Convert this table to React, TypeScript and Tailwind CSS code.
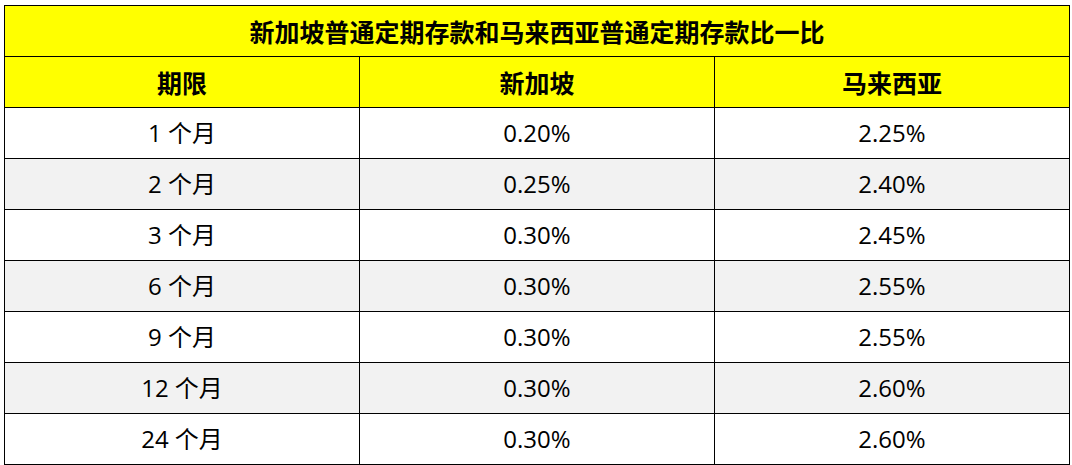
import React from "react";

const rows: [string, string, string][] = [
  ["1 个月", "0.20%", "2.25%"],
  ["2 个月", "0.25%", "2.40%"],
  ["3 个月", "0.30%", "2.45%"],
  ["6 个月", "0.30%", "2.55%"],
  ["9 个月", "0.30%", "2.55%"],
  ["12 个月", "0.30%", "2.60%"],
  ["24 个月", "0.30%", "2.60%"],
];

export default function App() {
  return (
    <div
      className="w-[1072px] h-[465px] bg-white pt-[5px] pl-[4px]"
      style={{ fontFamily: '"Open Sans", "Noto Sans CJK SC", sans-serif' }}
    >
      <table className="w-[1066px] border-collapse table-fixed text-[24px] text-black">
        <thead>
          <tr className="h-[51px] bg-[#ffff00]">
            <th
              colSpan={3}
              className="border border-black font-bold text-[25px] text-center p-0 leading-none"
              style={{ fontFamily: '"Noto Sans CJK SC", sans-serif' }}
            >
              新加坡普通定期存款和马来西亚普通定期存款比一比
            </th>
          </tr>
          <tr className="h-[51px] bg-[#ffff00]">
            {["期限", "新加坡", "马来西亚"].map((h) => (
              <th
                key={h}
                className="border border-black font-bold text-[25px] text-center p-0 leading-none"
                style={{ fontFamily: '"Noto Sans CJK SC", sans-serif' }}
              >
                {h}
              </th>
            ))}
          </tr>
        </thead>
        <tbody>
          {rows.map((r, i) => (
            <tr
              key={r[0]}
              className={`h-[51px] ${i % 2 === 1 ? "bg-[#f2f2f2]" : "bg-white"}`}
            >
              {r.map((c, j) => (
                <td key={j} className="border border-black text-center p-0 leading-none">
                  {c}
                </td>
              ))}
            </tr>
          ))}
        </tbody>
      </table>
    </div>
  );
}
